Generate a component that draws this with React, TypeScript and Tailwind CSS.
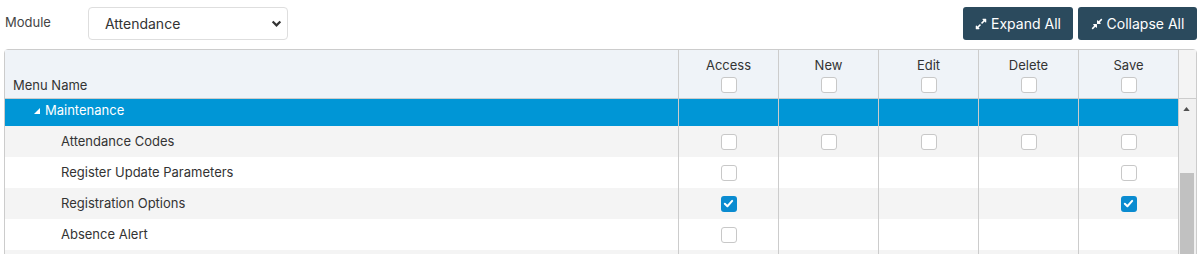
import { FaExpandAlt, FaCompressAlt } from "react-icons/fa"

const font = { fontFamily: "Inter, 'Noto Sans', sans-serif" }

type Row = { name: string; boxes: (boolean | null)[] }

const rows: Row[] = [
  { name: "Attendance Codes", boxes: [false, false, false, false, false] },
  { name: "Register Update Parameters", boxes: [false, null, null, null, false] },
  { name: "Registration Options", boxes: [true, null, null, null, true] },
  { name: "Absence Alert", boxes: [false, null, null, null, null] },
  { name: "", boxes: [null, null, null, null, null] },
]

function Box({ checked }: { checked: boolean }) {
  if (checked) {
    return (
      <span className="flex h-4 w-4 items-center justify-center rounded-[3px] bg-[#0a8bd0]">
        <svg viewBox="0 0 12 12" className="h-[11px] w-[11px]">
          <path d="M2 6.3 L4.8 9 L10 3.2" fill="none" stroke="white" strokeWidth="2.2" strokeLinecap="round" strokeLinejoin="round" />
        </svg>
      </span>
    )
  }
  return <span className="block h-4 w-4 rounded-[3px] border border-[#c8c8c8] bg-white" />
}

const cols = ["Access", "New", "Edit", "Delete", "Save"]

export default function App() {
  return (
    <div className="h-[254px] overflow-hidden bg-white pl-[4px] pr-[7px] pt-[7px] text-[#333]" style={font}>
      <div className="flex items-start">
        <span className="pl-[1px] pt-[6px] text-[13px] text-[#444]">Module</span>
        <div className="ml-[37px] flex h-[33px] w-[200px] items-center justify-between rounded-[4px] border border-[#dedede] pl-4 pr-[5px] text-[14px]">
          <span>Attendance</span>
          <svg viewBox="0 0 10 10" className="h-[11px] w-[11px]">
            <path d="M1.5 3.2 L5 6.7 L8.5 3.2" fill="none" stroke="#333" strokeWidth="2" />
          </svg>
        </div>
        <div className="ml-auto flex gap-[5px]">
          <button className="flex h-[33px] w-[110px] items-center justify-center gap-[4px] rounded-[3px] bg-[#2b4a5d] text-[14px] text-white">
            <FaExpandAlt className="h-[12px] w-[12px]" />
            Expand All
          </button>
          <button className="flex h-[33px] w-[119px] items-center justify-center gap-[4px] rounded-[3px] bg-[#2b4a5d] text-[14px] text-white">
            <FaCompressAlt className="h-[12px] w-[12px]" />
            Collapse All
          </button>
        </div>
      </div>

      <div className="mt-[9px] rounded-t-[4px] border border-[#cccccc] text-[13px]">
        <div className="flex h-[49px] border-b border-[#cccccc]">
          <div className="flex flex-1 items-end bg-[#eff3f8] pb-[3px] pl-[8px]">Menu Name</div>
          {cols.map((c) => (
            <div key={c} className="flex w-[100px] flex-col items-center border-l border-[#cccccc] bg-[#eff3f8] pt-[7px]">
              <span className="leading-[16px]">{c}</span>
              <span className="mt-[4px]">
                <Box checked={false} />
              </span>
            </div>
          ))}
          <div className="w-[18px] border-l border-[#cccccc] bg-[#f4f4f4]" />
        </div>

        <div className="flex">
          <div className="flex-1">
            <div className="flex h-[27px]">
              <div className="flex flex-1 items-center bg-[#0096d6] pb-[3px] pl-[29px] text-white">
                <svg viewBox="0 0 6 6" className="mr-[5px] h-[6px] w-[6px]">
                  <polygon points="6,0 6,6 0,6" fill="white" />
                </svg>
                Maintenance
              </div>
              {cols.map((c) => (
                <div key={c} className="w-[100px] border-l border-[#cccccc] bg-[#0096d6]" />
              ))}
            </div>
            {rows.map((r, i) => (
              <div key={i} className={`flex h-[31px] ${i % 2 === 0 ? "bg-[#f4f4f4]" : "bg-white"}`}>
                <div className="flex flex-1 items-center pl-[56px]">{r.name}</div>
                {r.boxes.map((b, j) => (
                  <div key={j} className="flex w-[100px] items-center justify-center border-l border-[#cccccc]">
                    {b !== null && <Box checked={b} />}
                  </div>
                ))}
              </div>
            ))}
          </div>
          <div className="flex w-[18px] flex-col border-l border-[#cccccc] bg-[#f1f1f1]">
            <svg viewBox="0 0 8 5" className="ml-[4px] mt-[8px] h-[4px] w-[7px]">
              <polygon points="4,0 8,5 0,5" fill="#505050" />
            </svg>
            <div className="ml-[1px] mt-[62px] h-[120px] w-[14px] bg-[#c1c1c1]" />
          </div>
        </div>
      </div>
    </div>
  )
}
